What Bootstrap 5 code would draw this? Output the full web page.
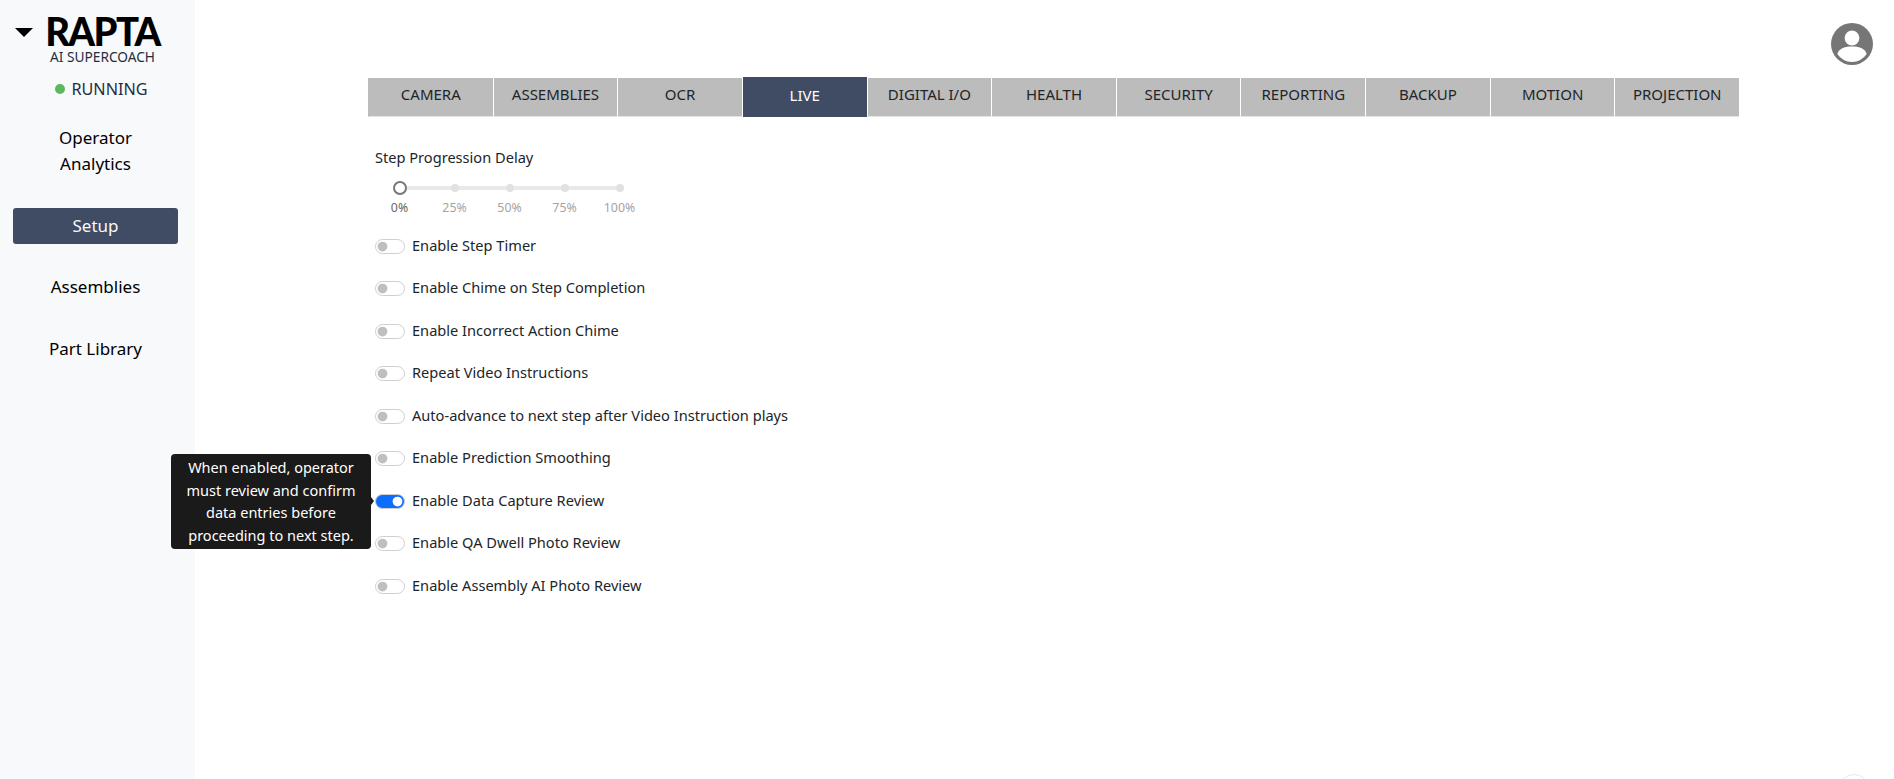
<!DOCTYPE html>
<html lang="en"><head><meta charset="utf-8"><title>Rapta</title>
<link href="https://cdn.jsdelivr.net/npm/bootstrap@5.3.0/dist/css/bootstrap.min.css" rel="stylesheet">
<style>
html,body{height:100%;overflow:hidden}
body{font-family:"Noto Sans",sans-serif;color:#212529;background:#fff}
.shell{height:779px}
.side{width:195px;background:#f8f9fa;flex:none}
.brand{padding:15px 0 0 15px;height:73px}
.caret-mark{width:0;height:0;border-left:9px solid transparent;border-right:9px solid transparent;border-top:9px solid #000;margin-top:13px}
.logo-box{margin-left:12px;width:115px;text-align:center}
.logo-word{font-family:"Lato",sans-serif;font-weight:900;font-size:40px;line-height:32px;letter-spacing:-1.7px;color:#000;display:block;transform:scaleX(.955);margin:0 -6px}
.logo-sub{font-size:13.7px;line-height:16px;color:#1f2d45;display:block;margin-top:2px;white-space:nowrap;margin-left:-5px;margin-right:-5px}
.state{font-size:16.2px;line-height:24px;color:#1f2d45;height:30px;margin-top:1px;padding-left:8px}
.state-dot{width:10px;height:10px;background:#5cb85c;margin-right:6px}
.side-link{display:block;text-align:center;color:#000;font-size:17px;line-height:26px;text-decoration:none;margin:0 17px 0 13px;padding:5px 30px;border-radius:3px}
.side-link.on{background:#3f4c63;color:#f8f9fa}
.stack{padding-top:16px;gap:25.6px}
.main-pane{min-width:0}
.top-row{height:77px}
.avatar{margin:23px 21px 0 0}
.tab-bar{margin:0 155px 0 173px;height:40px;align-items:flex-start}
.tab-cell{flex:1 1 0;height:39px;margin-top:1px;background:#bcbcbc;color:#212529;font-size:15px;line-height:33px;text-align:center;text-decoration:none;border-left:1px solid #fff;border-bottom:1px solid #e4e4e4;white-space:nowrap}
.tab-cell:first-child{border-left-color:#bcbcbc}
.tab-cell.on{background:#3f4c63;color:#fff;margin-top:0;height:40px;line-height:37px;border-bottom:0}
.form-zone{padding:30px 0 0 180px;position:relative}
.field-title{font-size:14.6px;line-height:20px;color:#212529}
.slider-zone{width:275px;margin-top:14px}
.rail{height:14px;width:249px;padding-left:21px;background:linear-gradient(#e9e9e9,#e9e9e9) no-repeat 25px 5px/220px 4px}
.pip{width:8px;height:8px;border-radius:50%;background:#e1e1e1}
.knob{width:14px;height:14px;border-radius:50%;background:#fff;border:2px solid #777;margin:0 -3px}
.ticks{width:275px;margin-left:-3px;margin-top:4px}
.ticks span{width:55px;text-align:center;font-size:12.3px;line-height:18px;color:#a3a3a3}
.ticks span:first-child{color:#666}
.switch-list{margin-top:7px}
.switch-row{height:42.5px;margin:0;padding:0;display:flex;align-items:center;min-height:0}
.switch-row .form-check-input{width:30px;height:15px;margin:2px 7px 0 0;float:none;flex:none;border-color:#cfcfcf}
.switch-row .form-check-label{font-size:14.6px;color:#212529;line-height:20px;margin-bottom:1px}
.hint{position:absolute;left:-24px;top:337px;width:200px;height:95px;background:#1a1a1a;color:#fff;border-radius:4px;font-size:14.5px;line-height:22.5px;text-align:center;padding:2px 6px 0}
.hint::after{content:"";position:absolute;right:-3px;top:43px;border-left:3px solid #1a1a1a;border-top:4px solid transparent;border-bottom:4px solid transparent}
.corner-arc{position:fixed;left:1838px;top:774px;width:32px;height:32px;border:1px solid #e9e9e9;border-radius:50%}
</style></head>
<body>
<div class="d-flex shell">
  <aside class="side d-flex flex-column">
    <div class="brand d-flex align-items-start">
      <span class="caret-mark"></span>
      <div class="logo-box"><span class="logo-word">RAPTA</span><span class="logo-sub">AI SUPERCOACH</span></div>
    </div>
    <div class="state d-flex align-items-center justify-content-center"><span class="state-dot rounded-circle d-inline-block"></span>RUNNING</div>
    <nav class="d-flex flex-column stack">
      <a class="side-link" href="#">Operator Analytics</a>
      <a class="side-link on" href="#">Setup</a>
      <a class="side-link" href="#">Assemblies</a>
      <a class="side-link" href="#">Part Library</a>
    </nav>
  </aside>
  <main class="main-pane flex-grow-1 position-relative">
    <div class="top-row d-flex justify-content-end">
      <svg class="avatar" width="42" height="42" viewBox="0 0 42 42"><circle cx="21" cy="21" r="21" fill="#767676"/><circle cx="21" cy="15" r="7.400" fill="#fff"/><path d="M6.300 31c2-6 8-7.500 14.700-7.500S33.700 25 35.700 31A18.500 18.500 0 0 1 21 39 18.500 18.500 0 0 1 6.300 31z" fill="#fff"/></svg>
    </div>
    <div class="tab-bar d-flex">
      <a class="tab-cell" href="#">CAMERA</a><a class="tab-cell" href="#">ASSEMBLIES</a><a class="tab-cell" href="#">OCR</a><a class="tab-cell on" href="#">LIVE</a><a class="tab-cell" href="#">DIGITAL I/O</a><a class="tab-cell" href="#">HEALTH</a><a class="tab-cell" href="#">SECURITY</a><a class="tab-cell" href="#">REPORTING</a><a class="tab-cell" href="#">BACKUP</a><a class="tab-cell" href="#">MOTION</a><a class="tab-cell" href="#">PROJECTION</a>
    </div>
    <section class="form-zone">
      <div class="field-title">Step Progression Delay</div>
      <div class="slider-zone">
        <div class="rail d-flex align-items-center justify-content-between">
          <span class="knob"></span><span class="pip"></span><span class="pip"></span><span class="pip"></span><span class="pip"></span>
        </div>
        <div class="ticks d-flex"><span>0%</span><span>25%</span><span>50%</span><span>75%</span><span>100%</span></div>
      </div>
      <div class="switch-list">
        <div class="form-check form-switch switch-row"><input class="form-check-input" type="checkbox" role="switch" id="s1"><label class="form-check-label" for="s1">Enable Step Timer</label></div>
        <div class="form-check form-switch switch-row"><input class="form-check-input" type="checkbox" role="switch" id="s2"><label class="form-check-label" for="s2">Enable Chime on Step Completion</label></div>
        <div class="form-check form-switch switch-row"><input class="form-check-input" type="checkbox" role="switch" id="s3"><label class="form-check-label" for="s3">Enable Incorrect Action Chime</label></div>
        <div class="form-check form-switch switch-row"><input class="form-check-input" type="checkbox" role="switch" id="s4"><label class="form-check-label" for="s4">Repeat Video Instructions</label></div>
        <div class="form-check form-switch switch-row"><input class="form-check-input" type="checkbox" role="switch" id="s5"><label class="form-check-label" for="s5">Auto-advance to next step after Video Instruction plays</label></div>
        <div class="form-check form-switch switch-row"><input class="form-check-input" type="checkbox" role="switch" id="s6"><label class="form-check-label" for="s6">Enable Prediction Smoothing</label></div>
        <div class="form-check form-switch switch-row"><input class="form-check-input" type="checkbox" role="switch" id="s7" checked><label class="form-check-label" for="s7">Enable Data Capture Review</label></div>
        <div class="form-check form-switch switch-row"><input class="form-check-input" type="checkbox" role="switch" id="s8"><label class="form-check-label" for="s8">Enable QA Dwell Photo Review</label></div>
        <div class="form-check form-switch switch-row"><input class="form-check-input" type="checkbox" role="switch" id="s9"><label class="form-check-label" for="s9">Enable Assembly AI Photo Review</label></div>
      </div>
      <div class="hint">When enabled, operator must review and confirm data entries before proceeding to next step.</div>
    </section>
    <span class="corner-arc"></span>
  </main>
</div>
<script src="https://cdn.jsdelivr.net/npm/bootstrap@5.3.0/dist/js/bootstrap.bundle.min.js"></script>
</body></html>
